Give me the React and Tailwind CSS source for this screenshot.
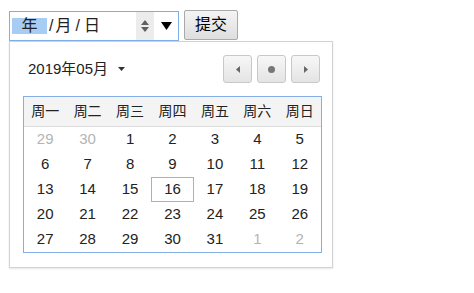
import React from "react";

const WEEK = ["周一", "周二", "周三", "周四", "周五", "周六", "周日"];

const buildDays = () => {
  const days = [
    { d: 29, muted: true },
    { d: 30, muted: true },
  ];
  for (let i = 1; i <= 31; i++) days.push({ d: i });
  days.push({ d: 1, muted: true }, { d: 2, muted: true });
  return days;
};

const NavButton = ({ children }) => (
  <button className="w-[29px] h-[28px] flex items-center justify-center rounded-[3px] border border-[#c8c8c8] bg-gradient-to-b from-[#f7f7f7] to-[#e4e4e4]">
    {children}
  </button>
);

const App = () => {
  const days = buildDays();

  return (
    <div
      className="w-[474px] h-[293px] bg-white pl-[9px] pt-[10px] text-[#222]"
      style={{ fontFamily: '"Liberation Sans", "Noto Sans CJK SC", sans-serif' }}
    >
      <div className="flex items-start gap-[5px]">
        <div className="mt-[1px] w-[170px] h-[30px] border border-[#7eaee4] flex items-center pl-[2px] text-[16px] leading-none">
          <span className="h-[16px] w-[35px] bg-[#a8cdf5] flex items-center justify-center">
            年
          </span>
          <span className="ml-[2px]">/</span>
          <span className="ml-[2px]">月</span>
          <span className="ml-[4px]">/</span>
          <span className="ml-[4px]">日</span>
          <div className="ml-auto h-full w-[18px] bg-[#ececec] flex flex-col items-center justify-center gap-[2px]">
            <svg width="8" height="5" viewBox="0 0 8 5">
              <path d="M0 5 L4 0 L8 5 Z" fill="#606060" />
            </svg>
            <svg width="8" height="5" viewBox="0 0 8 5">
              <path d="M0 0 L4 5 L8 0 Z" fill="#606060" />
            </svg>
          </div>
          <div className="w-[24px] flex items-center justify-center">
            <svg width="11" height="8" viewBox="0 0 11 8">
              <path d="M0 0 L11 0 L5.5 8 Z" fill="#000" />
            </svg>
          </div>
        </div>
        <button className="w-[54px] h-[30px] border border-[#a9a9a9] rounded-[2px] bg-gradient-to-b from-[#f4f4f4] to-[#dedede] text-[16px] leading-none text-black">
          提交
        </button>
      </div>

      <div className="w-[324px] border border-[#d2d2d2] shadow-[0_1px_2px_rgba(0,0,0,0.1)] pt-[13px] pl-[13px] pr-[11px] pb-[14px]">
        <div className="flex items-center justify-between pr-[1px]">
          <div className="flex items-center pl-[5px] text-[15px] text-[#222]">
            <span>2019年05月</span>
            <svg className="ml-[10px]" width="7" height="4" viewBox="0 0 7 4">
              <path d="M0 0 L7 0 L3.5 4 Z" fill="#333" />
            </svg>
          </div>
          <div className="flex gap-[5px]">
            <NavButton>
              <svg width="4" height="7" viewBox="0 0 4 7">
                <path d="M4 0 L0 3.5 L4 7 Z" fill="#666" />
              </svg>
            </NavButton>
            <NavButton>
              <span className="w-[7px] h-[7px] rounded-full bg-[#777]" />
            </NavButton>
            <NavButton>
              <svg width="4" height="7" viewBox="0 0 4 7">
                <path d="M0 0 L4 3.5 L0 7 Z" fill="#666" />
              </svg>
            </NavButton>
          </div>
        </div>

        <div className="mt-[13px] w-[299px] border border-[#86aee6]">
          <div className="grid grid-cols-7 h-[30px] bg-[#f4f4f4] border-b border-[#dcdcdc] text-[14px] text-[#222]">
            {WEEK.map((w) => (
              <div key={w} className="flex items-center justify-center">
                {w}
              </div>
            ))}
          </div>
          <div className="grid grid-cols-7 text-[15px]">
            {days.map((item, i) => (
              <div
                key={i}
                className={`h-[25px] flex items-center justify-center ${
                  item.muted ? "text-[#b4b4b4]" : "text-[#222]"
                } ${!item.muted && item.d === 16 ? "border border-[#b0b0b0]" : ""}`}
              >
                {item.d}
              </div>
            ))}
          </div>
        </div>
      </div>
    </div>
  );
};

export default App;
